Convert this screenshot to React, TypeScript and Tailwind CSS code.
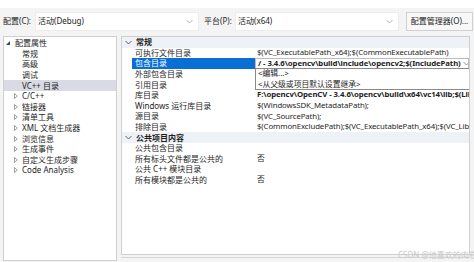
import React from 'react';

const font = { fontFamily: '"Noto Sans", "Noto Sans CJK SC", sans-serif' };

const tree = [
  { label: '配置属性', kind: 'open' },
  { label: '常规', kind: 'leaf' },
  { label: '高级', kind: 'leaf' },
  { label: '调试', kind: 'leaf' },
  { label: 'VC++ 目录', kind: 'leaf', selected: true },
  { label: 'C/C++', kind: 'closed' },
  { label: '链接器', kind: 'closed' },
  { label: '清单工具', kind: 'closed' },
  { label: 'XML 文档生成器', kind: 'closed' },
  { label: '浏览信息', kind: 'closed' },
  { label: '生成事件', kind: 'closed' },
  { label: '自定义生成步骤', kind: 'closed' },
  { label: 'Code Analysis', kind: 'closed' },
];

type Row = { name: string; value?: string; header?: boolean; bold?: boolean; selected?: boolean };

const rows: Row[] = [
  { name: '常规', header: true },
  { name: '可执行文件目录', value: '$(VC_ExecutablePath_x64);$(CommonExecutablePath)' },
  { name: '包含目录', value: '/ - 3.4.6\\opencv\\build\\include\\opencv2;$(IncludePath)', bold: true, selected: true },
  { name: '外部包含目录', value: '' },
  { name: '引用目录', value: '' },
  { name: '库目录', value: 'F:\\opencv\\OpenCV - 3.4.6\\opencv\\build\\x64\\vc14\\lib;$(LibraryPath)', bold: true },
  { name: 'Windows 运行库目录', value: '$(WindowsSDK_MetadataPath);' },
  { name: '源目录', value: '$(VC_SourcePath);' },
  { name: '排除目录', value: '$(CommonExcludePath);$(VC_ExecutablePath_x64);$(VC_LibraryPath_x64)' },
  { name: '公共项目内容', header: true },
  { name: '公共包含目录', value: '' },
  { name: '所有标头文件都是公共的', value: '否' },
  { name: '公共 C++ 模块目录', value: '' },
  { name: '所有模块都是公共的', value: '否' },
];

function Chevron({ className = '' }: { className?: string }) {
  return (
    <svg width="7" height="5" viewBox="0 0 7 5" className={className}>
      <path d="M0.5 1 L3.5 4 L6.5 1" fill="none" stroke="currentColor" strokeWidth="0.9" />
    </svg>
  );
}

function Combo({ text, width }: { text: string; width: string }) {
  return (
    <div className={`${width} h-[19px] bg-white border border-[#ececec] flex items-center justify-between pl-[2px] pr-[5px]`}>
      <span className="text-[8px] text-[#222] whitespace-nowrap">{text}</span>
      <Chevron className="text-[#aaa]" />
    </div>
  );
}

export default function App() {
  return (
    <div className="w-[474px] h-[262px] bg-[#f4f4f4] relative overflow-hidden text-[#1e1e1e]" style={font}>
      <div className="h-[8px] bg-white" />
      {/* toolbar */}
      <div className="flex items-center h-[20px] mt-[3px] pl-[3px]">
        <span className="text-[8px] w-[32px] whitespace-nowrap">配置(C):</span>
        <Combo text="活动(Debug)" width="w-[164px]" />
        <span className="text-[8px] ml-[5px] w-[31px] whitespace-nowrap">平台(P):</span>
        <Combo text="活动(x64)" width="w-[164px]" />
        <div className="ml-[7px] w-[67px] h-[19px] border border-[#d0d0d0] bg-[#f8f8f8] flex items-center justify-center text-[8px] whitespace-nowrap">
          配置管理器(O)...
        </div>
      </div>

      <div className="flex mt-[5px] pl-[3px]">
        {/* tree */}
        <div className="w-[114px] h-[225px] bg-white border border-[#cfcfcf] pt-[1px]">
          {tree.map((t) => (
            <div
              key={t.label}
              className={`h-[10.6px] flex items-center text-[8px] leading-none whitespace-nowrap ${t.selected ? 'bg-[#d9dae4]' : ''}`}
            >
              {t.kind === 'open' && (
                <>
                  <svg width="4" height="4" viewBox="0 0 4 4" className="ml-[2px] mr-[5px] text-[#444]">
                    <path d="M4 0 L4 4 L0 4 Z" fill="currentColor" />
                  </svg>
                  <span>{t.label}</span>
                </>
              )}
              {t.kind === 'leaf' && <span className="ml-[18px]">{t.label}</span>}
              {t.kind === 'closed' && (
                <>
                  <svg width="4" height="6" viewBox="0 0 4 6" className="ml-[10px] mr-[4px] text-[#777]">
                    <path d="M0.5 0.5 L3.3 3 L0.5 5.5 Z" fill="none" stroke="currentColor" strokeWidth="0.7" />
                  </svg>
                  <span>{t.label}</span>
                </>
              )}
            </div>
          ))}
        </div>

        {/* property grid */}
        <div className="ml-[4px] flex flex-col">
          <div className="w-[349px] h-[219px] bg-white border border-[#cfcfcf] relative overflow-hidden">
            {rows.map((r) =>
              r.header ? (
                <div key={r.name} className="h-[10.6px] bg-[#eef1f6] flex items-center text-[8px] leading-none font-bold whitespace-nowrap">
                  <Chevron className="ml-[3px] mr-[4px] text-[#555]" />
                  <span>{r.name}</span>
                </div>
              ) : (
                <div key={r.name} className="h-[10.6px] flex text-[8px] leading-none whitespace-nowrap">
                  <div className="w-[133px] pl-[10px] flex items-center shrink-0">
                    <div className={`w-full h-full flex items-center pl-[3px] ${r.selected ? 'bg-[#0a6fd4] text-white' : ''}`}>
                      {r.name}
                    </div>
                  </div>
                  <div
                    className={`flex-1 min-w-0 flex items-center pl-[2px] overflow-hidden ${
                      r.bold ? 'font-bold' : ''
                    } ${r.selected ? 'justify-between pr-[3px] border border-[#bcbcbc]' : ''}`}
                  >
                    <span className="text-[7.8px] tracking-[-0.1px]">{r.value}</span>
                    {r.selected && <Chevron className="text-[#888] shrink-0 ml-[2px]" />}
                  </div>
                </div>
              )
            )}

            {/* dropdown */}
            <div className="absolute left-[133px] top-[31px] w-[216px] h-[22px] bg-white border border-[#8a8a8a] text-[7.8px] leading-none pl-[2px] flex flex-col justify-center gap-[3px] whitespace-nowrap">
              <div>&lt;编辑...&gt;</div>
              <div>&lt;从父级或项目默认设置继承&gt;</div>
            </div>
          </div>
          <div className="h-[2px]" />
          <div className="w-[349px] border-t border-[#d6d6d6]" />
        </div>
      </div>

      <div className="absolute left-[398px] top-[249px] text-[8px] text-[#c9c9c9] whitespace-nowrap">CSDN @他喜欢的肉卷</div>
    </div>
  );
}
